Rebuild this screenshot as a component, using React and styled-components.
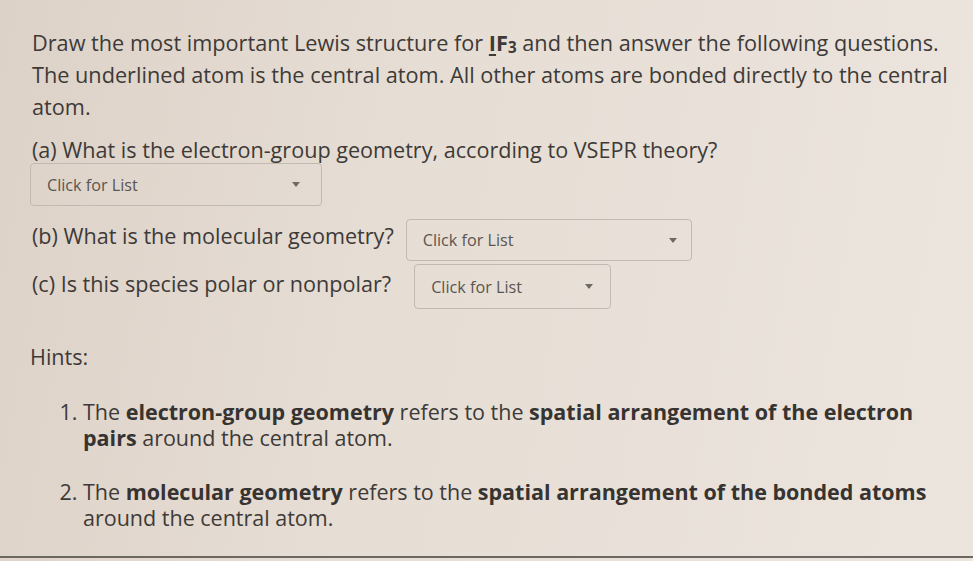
import React from 'react'
import styled, { createGlobalStyle } from 'styled-components'

const GlobalStyle = createGlobalStyle`
  html, body {
    margin: 0;
    padding: 0;
  }
  body {
    width: 973px;
    height: 561px;
    overflow: hidden;
    background: linear-gradient(100deg, #ddd2c8 0%, #e6ddd4 40%, #ece5de 100%);
    font-family: "Open Sans", "Noto Sans", sans-serif;
    color: #3d3a38;
  }
`

const Page = styled.div`
  height: 558px;
  box-sizing: border-box;
  padding: 27px 0 0 32px;
  border-bottom: 2px solid #6d6762;
`

const Intro = styled.p`
  margin: 0;
  width: 928px;
  font-size: 21.7px;
  line-height: 32px;
`

const Atom = styled.b`
  text-decoration: underline;
  text-decoration-thickness: 2px;
  text-underline-offset: 3px;
`

const Sub = styled.sub`
  font-size: 0.7em;
  vertical-align: -0.15em;
  line-height: 0;
`

const Question = styled.div`
  display: flex;
  flex-direction: ${p => (p.$stacked ? 'column' : 'row')};
  align-items: ${p => (p.$stacked ? 'flex-start' : 'center')};
  gap: ${p => (p.$stacked ? '0' : '12px')};
  margin-top: ${p => p.$top}px;
  font-size: 21.6px;
  line-height: 26px;
`

const Label = styled.span`
  position: relative;
  top: ${p => p.$lift || 0}px;
`

const Select = styled.div`
  box-sizing: border-box;
  width: ${p => p.$w}px;
  height: ${p => p.$h || 42}px;
  margin-left: ${p => p.$shift || 0}px;
  display: flex;
  align-items: center;
  justify-content: space-between;
  padding: 0 ${p => p.$pr || 20}px 0 16px;
  border: 1.5px solid #c2bab2;
  border-radius: 4px;
  font-size: 16.2px;
  line-height: 20px;
  color: #5a5551;
`

const Caret = styled.span`
  width: 0;
  height: 0;
  border-left: 4.5px solid transparent;
  border-right: 4.5px solid transparent;
  border-top: 5px solid #6f6964;
`

const HintsTitle = styled.div`
  margin-top: 35px;
  font-size: 21.6px;
  line-height: 26px;
  margin-left: -2px;
`

const HintList = styled.ol`
  margin: 29px 0 0 0;
  padding-left: 51px;
  font-size: 21.5px;
  line-height: 26px;

  li {
    width: 862px;
    padding-left: 0;
  }
  li + li {
    margin-top: 28px;
  }
  b {
    font-weight: 700;
    color: #363331;
  }
`

const Dropdown = ({ w, h, shift, pr }) => (
  <Select $w={w} $h={h} $shift={shift} $pr={pr}>
    <span>Click for List</span>
    <Caret />
  </Select>
)

export default function App() {
  return (
    <>
      <GlobalStyle />
      <Page>
        <Intro>
          Draw the most important Lewis structure for <Atom>I</Atom><b>F<Sub>3</Sub></b> and then answer the following questions.
          The underlined atom is the central atom. All other atoms are bonded directly to the central atom.
        </Intro>

        <Question $stacked $top={14}>
          <span>(a) What is the electron-group geometry, according to VSEPR theory?</span>
          <Dropdown w={292} h={43} shift={-2} pr={21} />
        </Question>

        <Question $top={13}>
          <Label $lift={-4}>(b) What is the molecular geometry?</Label>
          <Dropdown w={286} h={42} pr={14} />
        </Question>

        <Question $top={3}>
          <Label $lift={-3}>(c) Is this species polar or nonpolar?</Label>
          <Dropdown w={197} h={45} shift={11} pr={17} />
        </Question>

        <HintsTitle>Hints:</HintsTitle>

        <HintList>
          <li>
            The <b>electron-group geometry</b> refers to the <b>spatial arrangement of the electron pairs</b> around the central atom.
          </li>
          <li>
            The <b>molecular geometry</b> refers to the <b>spatial arrangement of the bonded atoms</b> around the central atom.
          </li>
        </HintList>
      </Page>
    </>
  )
}
